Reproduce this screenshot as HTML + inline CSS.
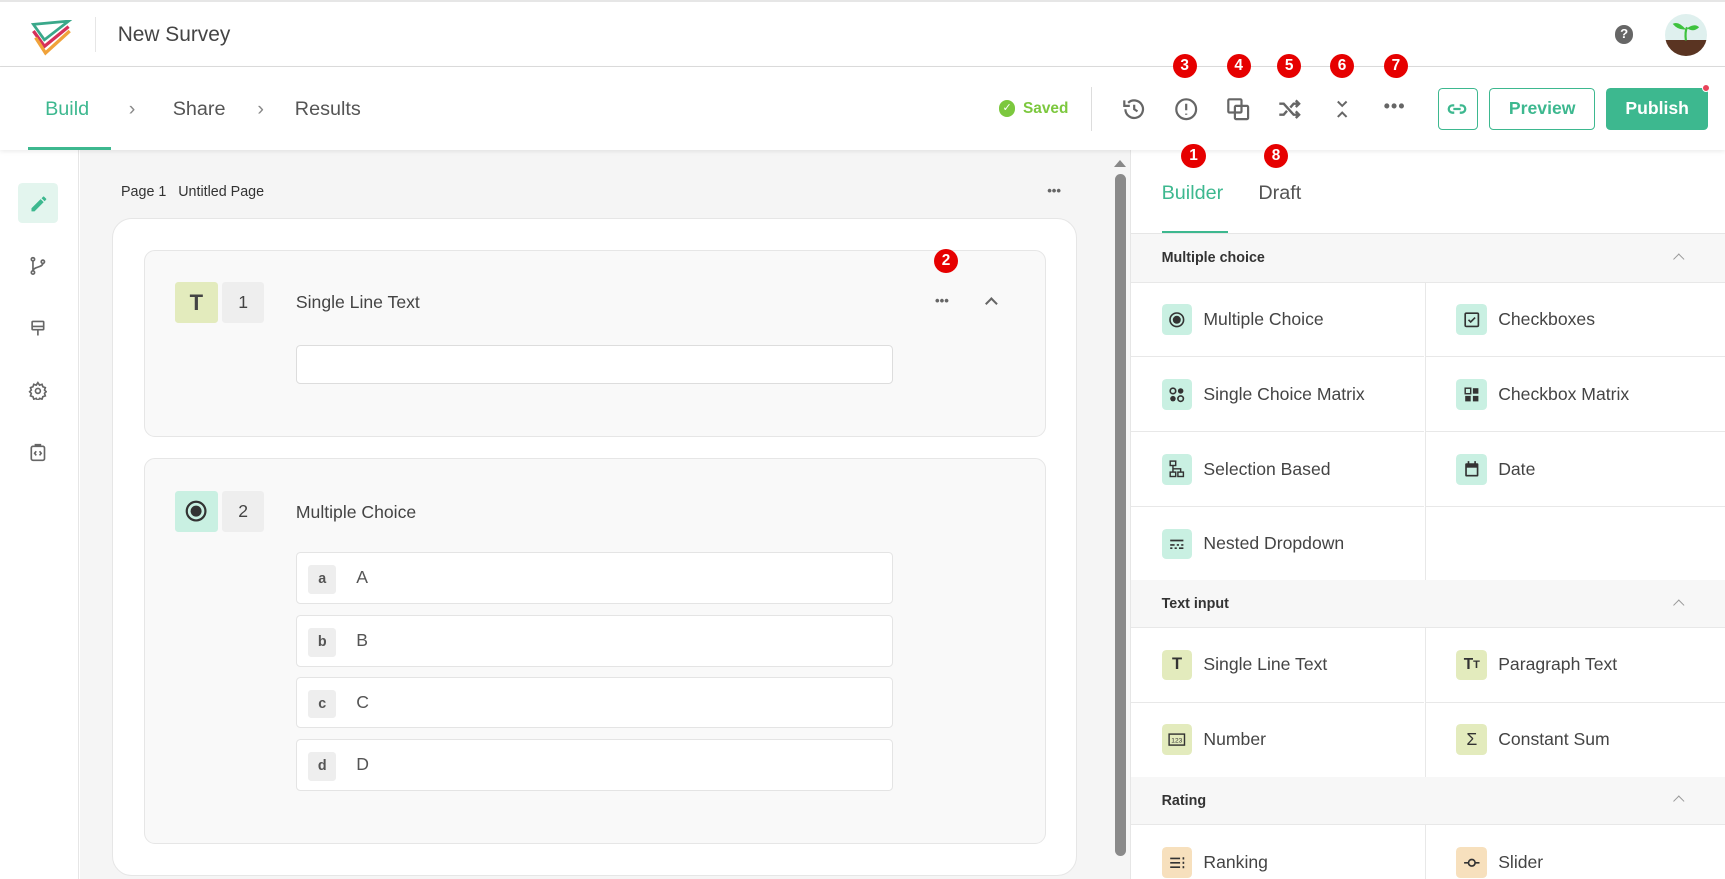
<!DOCTYPE html>
<html><head><meta charset="utf-8">
<style>
*{box-sizing:border-box;margin:0;padding:0}
html,body{width:1725px;height:879px;overflow:hidden;background:#fff}
#r{zoom:1.1;width:1568px;height:799px;position:relative;font-family:"Liberation Sans",sans-serif;color:#444;overflow:hidden}
.a{position:absolute}
.badge{position:absolute;width:22px;height:22px;border-radius:50%;background:#e60000;color:#fff;font-weight:bold;font-size:14px;text-align:center;line-height:22px}
.ic{position:absolute;width:24px;height:24px}
.row{position:absolute;height:68px;border-bottom:1px solid #e8e8e8;display:flex;align-items:center;font-size:16px;color:#444}
.ib{width:28px;height:28px;border-radius:4px;margin-right:10px;display:flex;align-items:center;justify-content:center}
.sec{position:absolute;left:1028px;width:540px;height:44px;background:#f7f7f7;border-bottom:1px solid #e8e8e8;font-size:13px;font-weight:bold;color:#333;padding-left:28px;line-height:44px}
.sec:after{content:"";position:absolute;right:38px;top:19px;width:6px;height:6px;border-left:1.5px solid #999;border-top:1.5px solid #999;transform:rotate(45deg)}
.opt{position:absolute;left:269px;width:543px;height:47px;background:#fff;border:1px solid #e4e4e4;border-radius:4px}
.opt b{position:absolute;left:10px;top:11px;width:26px;height:26px;background:#eee;border-radius:3px;font-size:13px;text-align:center;line-height:26px;color:#555}
.opt span{position:absolute;left:54px;top:13px;font-size:16px;color:#555}
</style></head><body><div id="r">
<!-- top bar -->
<div class="a" style="left:0;top:0;width:1568px;height:2px;background:#e6e6e6"></div>
<div class="a" style="left:0;top:60px;width:1568px;height:1px;background:#dcdcdc"></div>
<svg class="a" style="left:26px;top:18px" width="40" height="34" viewBox="0 0 40 34"><path d="M4 4 L36 1 L14 18 Z" fill="none" stroke="#3aa88a" stroke-width="2.5"/><path d="M4 10 L14 24 L36 6" fill="none" stroke="#d6305a" stroke-width="3"/><path d="M6 16 L15 30 L37 10" fill="none" stroke="#f0a23a" stroke-width="3"/></svg>
<div class="a" style="left:86px;top:15px;width:1px;height:32px;background:#e6e6e6"></div>
<div class="a" style="left:107px;top:21px;font-size:19px;color:#444">New Survey</div>
<div class="a" style="left:1468px;top:23px;width:17px;height:17px;border-radius:50%;background:#666;color:#fff;font-size:12px;font-weight:bold;text-align:center;line-height:17px">?</div>
<div class="a" style="left:1514px;top:13px;width:38px;height:38px;border-radius:50%;background:#dff0ee;overflow:hidden"><div style="position:absolute;left:0;top:23px;width:38px;height:16px;background:#5a3422"></div><svg width="38" height="38" style="position:absolute;left:0;top:0"><path d="M19 24 Q18 16 20 12" stroke="#3ec23e" stroke-width="2" fill="none"/><path d="M19 14 Q12 6 7 9 Q12 15 19 14" fill="#3ec23e"/><path d="M20 13 Q27 8 31 12 Q26 17 20 13" fill="#3ec23e"/></svg></div>
<!-- second bar -->
<div class="a" style="left:0;top:61px;width:1568px;height:75px;background:#fff;box-shadow:0 2px 4px rgba(0,0,0,.08);z-index:2">
<div class="a" style="left:41px;top:28px;font-size:18px;color:#3db88f">Build</div>
<div class="a" style="left:25px;top:73px;width:76px;height:2px;background:#3db88f"></div>
<div class="a" style="left:117px;top:28px;font-size:18px;color:#888">›</div>
<div class="a" style="left:157px;top:28px;font-size:18px;color:#555">Share</div>
<div class="a" style="left:234px;top:28px;font-size:18px;color:#888">›</div>
<div class="a" style="left:268px;top:28px;font-size:18px;color:#555">Results</div>
<div class="a" style="left:908px;top:30px;width:15px;height:15px;border-radius:50%;background:#7cc83e;color:#fff;font-size:10px;text-align:center;line-height:15px">✓</div>
<div class="a" style="left:930px;top:30px;font-size:14px;font-weight:bold;color:#7cc83e">Saved</div>
<div class="a" style="left:992px;top:18px;width:1px;height:40px;background:#ddd"></div>
<svg class="ic" style="left:1019px;top:26px" viewBox="0 0 24 24" fill="none" stroke="#666" stroke-width="2"><path d="M4 12a8 8 0 1 0 2.5-5.8"/><path d="M3 4v5h5"/><path d="M12 8v4l3 2"/></svg>
<svg class="ic" style="left:1066px;top:26px" viewBox="0 0 24 24" fill="none" stroke="#666" stroke-width="2"><circle cx="12" cy="12" r="9"/><path d="M12 7v6M12 16v1"/></svg>
<svg class="ic" style="left:1114px;top:26px" viewBox="0 0 24 24" fill="none" stroke="#666" stroke-width="2"><rect x="3" y="3" width="12" height="12" rx="1"/><rect x="9" y="9" width="12" height="12" rx="1"/></svg>
<svg class="ic" style="left:1160px;top:26px" viewBox="0 0 24 24" fill="none" stroke="#666" stroke-width="2.2"><path d="M3 7h4l9 10h4M3 17h4l3-3.5M13 10.5l3-3.5h4M18 4l3 3-3 3M18 14l3 3-3 3"/></svg>
<svg class="ic" style="left:1208px;top:26px" viewBox="0 0 24 24" fill="none" stroke="#666" stroke-width="1.8"><path d="M8 5l4 4 4-4M8 19l4-4 4 4"/></svg>
<div class="a" style="left:1258px;top:26px;font-size:16px;color:#666;font-weight:bold;letter-spacing:1px">•••</div>
<div class="a" style="left:1307px;top:19px;width:37px;height:38px;border:1.5px solid #3db88f;border-radius:4px"><svg width="20" height="20" style="position:absolute;left:7px;top:8px" viewBox="0 0 24 24" fill="none" stroke="#3db88f" stroke-width="2.5"><path d="M9 8H7a4 4 0 0 0 0 8h2M15 8h2a4 4 0 0 1 0 8h-2M8 12h8"/></svg></div>
<div class="a" style="left:1354px;top:19px;width:96px;height:38px;border:1.5px solid #3db88f;border-radius:4px;color:#3db88f;font-size:16px;font-weight:bold;text-align:center;line-height:35px">Preview</div>
<div class="a" style="left:1460px;top:19px;width:93px;height:38px;background:#3db88f;border-radius:4px;color:#fff;font-size:16px;font-weight:bold;text-align:center;line-height:38px">Publish</div>
<div class="a" style="left:1547px;top:15px;width:8px;height:8px;border-radius:50%;background:#e8445a;border:1px solid #fff"></div>
</div>
<!-- left sidebar -->
<div class="a" style="left:0;top:136px;width:72px;height:663px;background:#fff;border-right:1px solid #e6e6e6"></div>
<div class="a" style="left:16px;top:166px;width:37px;height:37px;background:#e3f5ee;border-radius:4px"><svg width="18" height="18" style="position:absolute;left:10px;top:10px" viewBox="0 0 24 24"><path d="M3 17.3V21h3.7L17.8 9.9l-3.7-3.7zM20.7 7c.4-.4.4-1 0-1.4l-2.3-2.3c-.4-.4-1-.4-1.4 0l-1.8 1.8 3.7 3.7z" fill="#3db88f"/></svg></div>
<svg class="a" style="left:25px;top:233px" width="18" height="18" viewBox="0 0 24 24" fill="none" stroke="#666" stroke-width="2"><circle cx="6" cy="4" r="2"/><circle cx="6" cy="20" r="2"/><circle cx="18" cy="7" r="2"/><path d="M6 6v12M18 9c0 5-12 4-12 9"/></svg>
<svg class="a" style="left:25px;top:290px" width="18" height="18" viewBox="0 0 24 24" fill="none" stroke="#666" stroke-width="2"><rect x="5" y="3" width="14" height="10" rx="1"/><path d="M5 9h14M12 13v7"/></svg>
<svg class="a" style="left:25px;top:346px" width="18" height="18" viewBox="0 0 24 24" fill="none" stroke="#666" stroke-width="2"><circle cx="12" cy="12" r="3"/><path d="M12 2l2 3 3-1 1 3 3 1-1 3 2 2-2 2 1 3-3 1-1 3-3-1-2 3-2-3-3 1-1-3-3-1 1-3-2-2 2-2-1-3 3-1 1-3 3 1z"/></svg>
<svg class="a" style="left:25px;top:403px" width="18" height="18" viewBox="0 0 24 24" fill="none" stroke="#666" stroke-width="2"><rect x="4" y="4" width="16" height="17" rx="2"/><path d="M9 4V2h6v2M10 10l-2 2.5 2 2.5M14 10l2 2.5-2 2.5"/></svg>
<!-- canvas -->
<div class="a" style="left:73px;top:136px;width:938px;height:663px;background:#f5f5f5"></div>
<div class="a" style="left:110px;top:167px;font-size:13px;color:#333">Page 1 &nbsp;&nbsp;Untitled Page</div>
<div class="a" style="left:952px;top:166px;font-size:12px;color:#666;font-weight:bold">•••</div>
<div class="a" style="left:102px;top:198px;width:877px;height:598px;background:#fff;border:1px solid #e6e6e6;border-radius:18px"></div>
<div class="a" style="left:131px;top:227px;width:820px;height:170px;background:#f9f9f9;border:1px solid #e6e6e6;border-radius:10px"></div>
<div class="a" style="left:159px;top:256px;width:39px;height:38px;background:#e3ebbd;border-radius:3px;font-size:20px;font-weight:bold;color:#444;text-align:center;line-height:38px">T</div>
<div class="a" style="left:202px;top:256px;width:38px;height:38px;background:#eee;border-radius:3px;font-size:16px;color:#444;text-align:center;line-height:38px">1</div>
<div class="a" style="left:269px;top:265px;font-size:16px;color:#444">Single Line Text</div>
<div class="a" style="left:850px;top:266px;font-size:12px;color:#666;font-weight:bold">•••</div>
<div class="a" style="left:897px;top:272px;width:8px;height:8px;border-left:2px solid #666;border-top:2px solid #666;transform:rotate(45deg)"></div>
<div class="a" style="left:269px;top:314px;width:543px;height:35px;background:#fff;border:1px solid #ddd;border-radius:4px"></div>
<div class="a" style="left:131px;top:416px;width:820px;height:351px;background:#f9f9f9;border:1px solid #e6e6e6;border-radius:10px"></div>
<div class="a" style="left:159px;top:446px;width:39px;height:38px;background:#c9f0e2;border-radius:3px"><svg width="22" height="22" style="position:absolute;left:8px;top:8px" viewBox="0 0 22 22"><circle cx="11" cy="11" r="8.5" fill="none" stroke="#333" stroke-width="2"/><circle cx="11" cy="11" r="5" fill="#333"/></svg></div>
<div class="a" style="left:202px;top:446px;width:38px;height:38px;background:#eee;border-radius:3px;font-size:16px;color:#444;text-align:center;line-height:38px">2</div>
<div class="a" style="left:269px;top:456px;font-size:16px;color:#444">Multiple Choice</div>
<div class="opt" style="top:502px"><b>a</b><span>A</span></div>
<div class="opt" style="top:559px"><b>b</b><span>B</span></div>
<div class="opt" style="top:615px"><b>c</b><span>C</span></div>
<div class="opt" style="top:672px"><b>d</b><span>D</span></div>
<!-- scrollbar -->
<div class="a" style="left:1011px;top:136px;width:16px;height:663px;background:#f5f5f5"></div>
<div class="a" style="left:1013px;top:145px;width:0;height:0;border-left:6px solid transparent;border-right:6px solid transparent;border-bottom:7px solid #888"></div>
<div class="a" style="left:1014px;top:158px;width:10px;height:620px;background:#8a8a8a;border-radius:5px"></div>
<!-- right panel -->
<div class="a" style="left:1027px;top:136px;width:541px;height:663px;background:#fff;border-left:1px solid #e6e6e6"></div>
<div class="a" style="left:1056px;top:165px;font-size:18px;color:#3db88f">Builder</div>
<div class="a" style="left:1144px;top:165px;font-size:18px;color:#555">Draft</div>
<div class="a" style="left:1056px;top:210px;width:60px;height:2px;background:#3db88f"></div>
<div class="a" style="left:1028px;top:212px;width:540px;height:1px;background:#e6e6e6"></div>
<div class="sec" style="top:213px">Multiple choice</div>
<div class="a" style="left:1295px;top:257px;width:1px;height:270px;background:#e8e8e8"></div>
<div class="row" style="left:1028px;top:257px;width:267px;padding-left:28px"><div class="ib" style="background:#c9f0e2"><svg width="16" height="16" viewBox="0 0 22 22"><circle cx="11" cy="11" r="8.5" fill="none" stroke="#333" stroke-width="2"/><circle cx="11" cy="11" r="5" fill="#333"/></svg></div>Multiple Choice</div>
<div class="row" style="left:1296px;top:257px;width:272px;padding-left:28px"><div class="ib" style="background:#c9f0e2"><svg width="16" height="16" viewBox="0 0 16 16" fill="none" stroke="#333" stroke-width="1.5"><rect x="2" y="2" width="12" height="12" rx="1"/><path d="M5 8l2 2 4-4"/></svg></div>Checkboxes</div>
<div class="row" style="left:1028px;top:325px;width:267px;padding-left:28px"><div class="ib" style="background:#c9f0e2"><svg width="16" height="16" viewBox="0 0 16 16" fill="#333"><circle cx="4.5" cy="4.5" r="2.5" fill="none" stroke="#333" stroke-width="1.5"/><circle cx="11.5" cy="4.5" r="2.5"/><circle cx="4.5" cy="11.5" r="2.5"/><circle cx="11.5" cy="11.5" r="2.5" fill="none" stroke="#333" stroke-width="1.5"/></svg></div>Single Choice Matrix</div>
<div class="row" style="left:1296px;top:325px;width:272px;padding-left:28px"><div class="ib" style="background:#c9f0e2"><svg width="16" height="16" viewBox="0 0 16 16" fill="#333"><rect x="2" y="2" width="5" height="5" fill="none" stroke="#333" stroke-width="1.3"/><rect x="9" y="2" width="5" height="5"/><rect x="2" y="9" width="5" height="5"/><rect x="9" y="9" width="5" height="5"/></svg></div>Checkbox Matrix</div>
<div class="row" style="left:1028px;top:393px;width:267px;padding-left:28px"><div class="ib" style="background:#c9f0e2"><svg width="16" height="16" viewBox="0 0 16 16" fill="none" stroke="#333" stroke-width="1.3"><rect x="2" y="1" width="5" height="4"/><rect x="2" y="11" width="5" height="4"/><rect x="9" y="11" width="5" height="4"/><path d="M4.5 5v6M4.5 8h7v3"/></svg></div>Selection Based</div>
<div class="row" style="left:1296px;top:393px;width:272px;padding-left:28px"><div class="ib" style="background:#c9f0e2"><svg width="16" height="16" viewBox="0 0 16 16"><rect x="2" y="3" width="12" height="12" rx="1" fill="#333"/><rect x="3.5" y="7" width="9" height="6.5" fill="#c9f0e2"/><path d="M5 1v3M11 1v3" stroke="#333" stroke-width="1.5"/></svg></div>Date</div>
<div class="row" style="left:1028px;top:461px;width:267px;padding-left:28px"><div class="ib" style="background:#c9f0e2"><svg width="16" height="16" viewBox="0 0 16 16" stroke="#333" stroke-width="1.5"><path d="M2 5h12M2 9h4M8 9h2M12 9h2M2 12h2M6 12h2M10 12h4"/></svg></div>Nested Dropdown</div>
<div class="sec" style="top:527px">Text input</div>
<div class="a" style="left:1295px;top:571px;width:1px;height:135px;background:#e8e8e8"></div>
<div class="row" style="left:1028px;top:571px;width:267px;padding-left:28px"><div class="ib" style="background:#e3ebbd;font-weight:bold;font-size:15px;color:#333">T</div>Single Line Text</div>
<div class="row" style="left:1296px;top:571px;width:272px;padding-left:28px"><div class="ib" style="background:#e3ebbd;font-weight:bold;font-size:14px;color:#333">T<span style="font-size:10px">T</span></div>Paragraph Text</div>
<div class="row" style="left:1028px;top:639px;width:267px;padding-left:28px"><div class="ib" style="background:#e3ebbd"><svg width="16" height="12" viewBox="0 0 16 12"><rect x="1" y="1" width="14" height="10" fill="none" stroke="#333" stroke-width="1.3"/><text x="8" y="8.5" font-size="6" text-anchor="middle" fill="#333" font-family="Liberation Sans">123</text></svg></div>Number</div>
<div class="row" style="left:1296px;top:639px;width:272px;padding-left:28px"><div class="ib" style="background:#e3ebbd;font-size:16px;color:#333">Σ</div>Constant Sum</div>
<div class="sec" style="top:706px">Rating</div>
<div class="a" style="left:1295px;top:750px;width:1px;height:49px;background:#e8e8e8"></div>
<div class="row" style="left:1028px;top:750px;width:267px;padding-left:28px;border:0"><div class="ib" style="background:#f7e0bd"><svg width="16" height="16" viewBox="0 0 16 16" stroke="#333" stroke-width="1.5"><path d="M2 4h9M2 8h9M2 12h9M14 3v2M14 7v2M14 11v2"/></svg></div>Ranking</div>
<div class="row" style="left:1296px;top:750px;width:272px;padding-left:28px;border:0"><div class="ib" style="background:#f7e0bd"><svg width="16" height="16" viewBox="0 0 16 16" stroke="#333" stroke-width="1.5" fill="none"><path d="M1 8h4M11 8h4"/><circle cx="8" cy="8" r="3"/></svg></div>Slider</div>
<!-- badges -->
<div class="badge" style="left:1066px;top:49px;z-index:5">3</div>
<div class="badge" style="left:1115px;top:49px;z-index:5">4</div>
<div class="badge" style="left:1161px;top:49px;z-index:5">5</div>
<div class="badge" style="left:1209px;top:49px;z-index:5">6</div>
<div class="badge" style="left:1258px;top:49px;z-index:5">7</div>
<div class="badge" style="left:1074px;top:131px;z-index:5">1</div>
<div class="badge" style="left:1149px;top:131px;z-index:5">8</div>
<div class="badge" style="left:849px;top:226px;z-index:5">2</div>
</div></body></html>
